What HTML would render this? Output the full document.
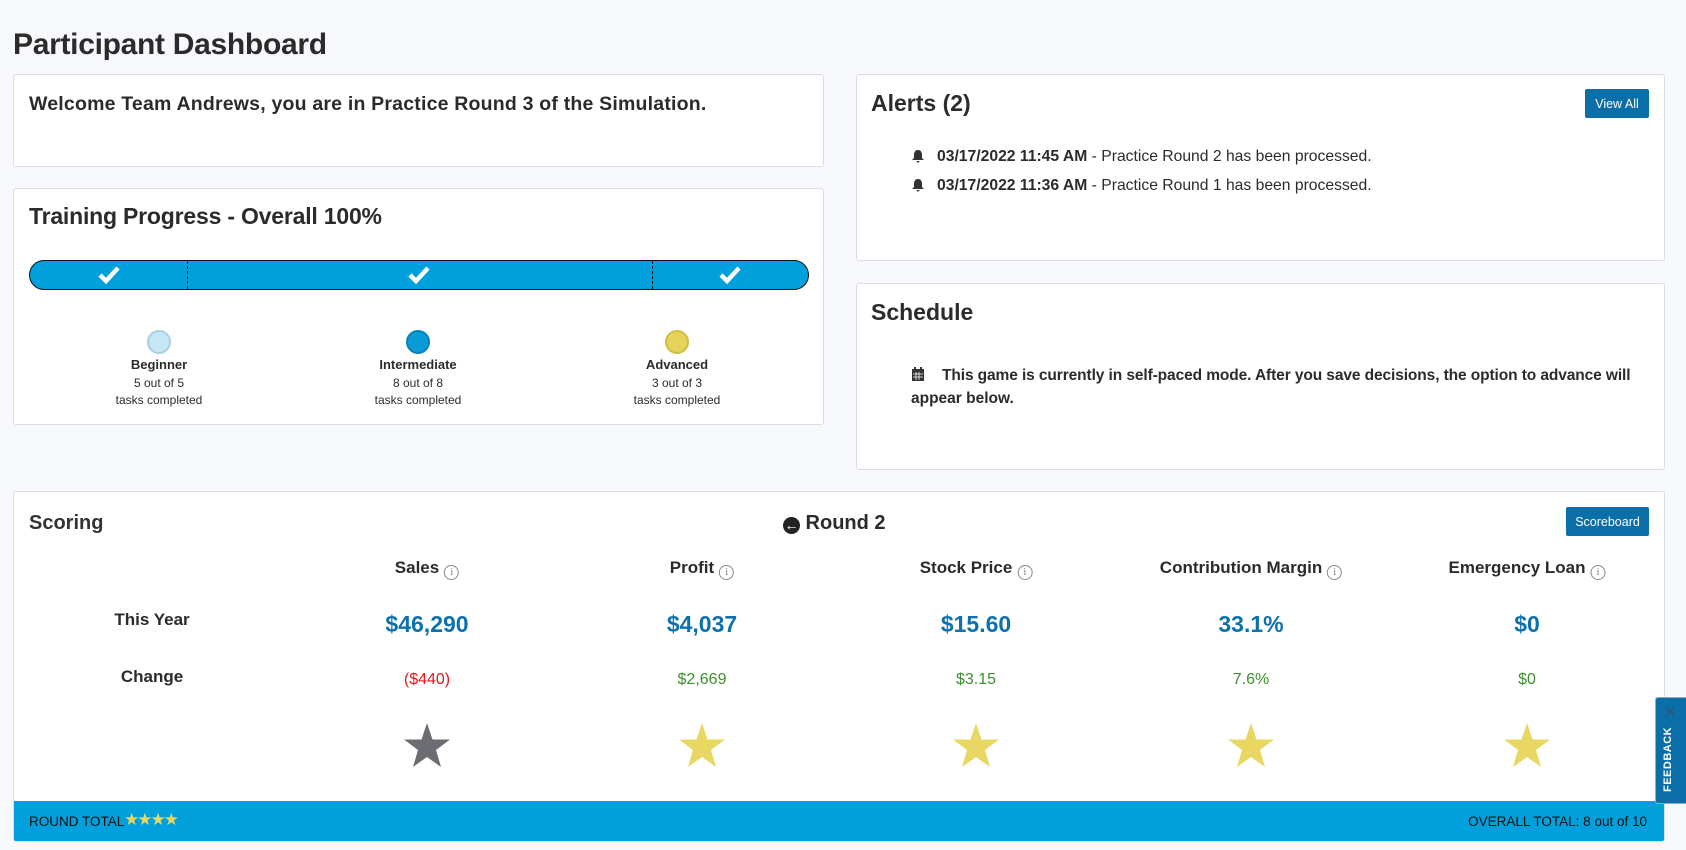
<!DOCTYPE html>
<html><head><meta charset="utf-8"><style>
*{box-sizing:border-box;margin:0;padding:0}
body{width:1686px;height:850px;background:#f7f8fc;font-family:"Liberation Sans",sans-serif;color:#2b2b2b;position:relative;overflow:hidden}
.a{position:absolute;white-space:nowrap}
.card{position:absolute;background:#fff;border:1px solid #dcdde2;border-radius:3px}
.btn{position:absolute;background:#0a6ea8;color:#fff;font-size:12.5px;border-radius:2px;display:flex;align-items:center;justify-content:center}
.c{transform:translateX(-50%);text-align:center}
.lbl{font-size:13px;font-weight:bold}
.sm{font-size:12px}
.hd{font-size:17px;font-weight:bold}
.val{font-size:23px;font-weight:bold;color:#0b72ad}
.chg{font-size:16px;color:#3d8f2d}
.info{display:inline-block;width:15px;height:15px;border:1.3px solid #888;border-radius:50%;font-size:11px;color:#888;line-height:13px;text-align:center;font-weight:normal;vertical-align:-2px;margin-left:5px;font-family:"Liberation Serif",serif}
</style></head><body>
<div class="a" style="left:13px;top:28px;font-size:30px;font-weight:bold;letter-spacing:-0.3px">Participant Dashboard</div>

<div class="card" style="left:13px;top:74px;width:811px;height:93px"></div>
<div class="a" style="left:29px;top:93px;font-size:19.5px;font-weight:bold;letter-spacing:0.2px">Welcome Team Andrews, you are in Practice Round 3 of the Simulation.</div>

<div class="card" style="left:13px;top:188px;width:811px;height:237px"></div>
<div class="a" style="left:29px;top:203px;font-size:23px;font-weight:bold;letter-spacing:-0.2px">Training Progress - Overall 100%</div>
<div class="a" style="left:29px;top:260px;width:780px;height:30px;background:#00a0dc;border:1.5px solid #111;border-radius:15px"></div>
<div class="a" style="left:187px;top:261px;height:28px;border-left:1.5px dashed #111"></div>
<div class="a" style="left:652px;top:261px;height:28px;border-left:1.5px dashed #111"></div>
<svg class="a" style="left:97px;top:264px" width="24" height="22" viewBox="0 0 24 22"><path d="M3 11 L9 17 L21 4" stroke="#fff" stroke-width="4.5" fill="none"/></svg>
<svg class="a" style="left:407px;top:264px" width="24" height="22" viewBox="0 0 24 22"><path d="M3 11 L9 17 L21 4" stroke="#fff" stroke-width="4.5" fill="none"/></svg>
<svg class="a" style="left:718px;top:264px" width="24" height="22" viewBox="0 0 24 22"><path d="M3 11 L9 17 L21 4" stroke="#fff" stroke-width="4.5" fill="none"/></svg>
<div class="a" style="left:147px;top:330px;width:24px;height:24px;border-radius:50%;background:#c6e6f6;border:2px solid #a9cfe3"></div>
<div class="a" style="left:406px;top:330px;width:24px;height:24px;border-radius:50%;background:#0a9ad6;border:2px solid #0683bb"></div>
<div class="a" style="left:665px;top:330px;width:24px;height:24px;border-radius:50%;background:#e6d35c;border:2px solid #cfbd45"></div>
<div class="a c lbl" style="left:159px;top:357px">Beginner</div>
<div class="a c sm" style="left:159px;top:376px">5 out of 5</div>
<div class="a c sm" style="left:159px;top:393px">tasks completed</div>
<div class="a c lbl" style="left:418px;top:357px">Intermediate</div>
<div class="a c sm" style="left:418px;top:376px">8 out of 8</div>
<div class="a c sm" style="left:418px;top:393px">tasks completed</div>
<div class="a c lbl" style="left:677px;top:357px">Advanced</div>
<div class="a c sm" style="left:677px;top:376px">3 out of 3</div>
<div class="a c sm" style="left:677px;top:393px">tasks completed</div>

<div class="card" style="left:856px;top:74px;width:809px;height:187px"></div>
<div class="a" style="left:871px;top:90px;font-size:23px;font-weight:bold">Alerts (2)</div>
<div class="btn" style="left:1585px;top:89px;width:64px;height:29px">View All</div>
<svg class="a" style="left:911px;top:149px" width="14" height="15" viewBox="0 0 14 15"><path d="M7 1 C4 1 3 3.5 3 6 L3 9 L1 11 L13 11 L11 9 L11 6 C11 3.5 10 1 7 1Z M5.5 12 A1.5 1.5 0 0 0 8.5 12Z" fill="#333"/></svg>
<div class="a" style="left:937px;top:148px;font-size:15.7px"><b>03/17/2022 11:45 AM</b> - Practice Round 2 has been processed.</div>
<svg class="a" style="left:911px;top:178px" width="14" height="15" viewBox="0 0 14 15"><path d="M7 1 C4 1 3 3.5 3 6 L3 9 L1 11 L13 11 L11 9 L11 6 C11 3.5 10 1 7 1Z M5.5 12 A1.5 1.5 0 0 0 8.5 12Z" fill="#333"/></svg>
<div class="a" style="left:937px;top:177px;font-size:15.7px"><b>03/17/2022 11:36 AM</b> - Practice Round 1 has been processed.</div>

<div class="card" style="left:856px;top:283px;width:809px;height:187px"></div>
<div class="a" style="left:871px;top:299px;font-size:23px;font-weight:bold">Schedule</div>
<svg class="a" style="left:911px;top:367px" width="14" height="15" viewBox="0 0 14 15"><rect x="1" y="2" width="12" height="12" fill="#333"/><rect x="3" y="0" width="2" height="3" fill="#333"/><rect x="9" y="0" width="2" height="3" fill="#333"/><path d="M2 7h10M2 10h10M5 5v8M8 5v8" stroke="#fff" stroke-width="0.8"/></svg>
<div class="a" style="left:942px;top:367px;font-size:15.5px;font-weight:bold;letter-spacing:-0.1px">This game is currently in self-paced mode. After you save decisions, the option to advance will</div>
<div class="a" style="left:911px;top:390px;font-size:15.5px;font-weight:bold">appear below.</div>

<div class="card" style="left:13px;top:491px;width:1652px;height:351px;overflow:hidden">
<div class="a" style="left:0;bottom:0;width:100%;height:40px;background:#00a0dc"></div>
</div>
<div class="a" style="left:29px;top:512px;font-size:20px;font-weight:bold;color:#333">Scoring</div>
<div class="a" style="left:783px;top:512px;font-size:20px;font-weight:bold"><span style="display:inline-block;width:17px;height:17px;border-radius:50%;background:#222;color:#fff;font-size:14px;line-height:16px;text-align:center;vertical-align:-1px">&#8592;</span> Round 2</div>
<div class="btn" style="left:1566px;top:507px;width:83px;height:29px">Scoreboard</div>

<div class="a c hd" style="left:427px;top:558px">Sales<span class="info">i</span></div>
<div class="a c hd" style="left:702px;top:558px">Profit<span class="info">i</span></div>
<div class="a c hd" style="left:976px;top:558px">Stock Price<span class="info">i</span></div>
<div class="a c hd" style="left:1251px;top:558px">Contribution Margin<span class="info">i</span></div>
<div class="a c hd" style="left:1527px;top:558px">Emergency Loan<span class="info">i</span></div>

<div class="a c hd" style="left:152px;top:610px">This Year</div>
<div class="a c hd" style="left:152px;top:667px">Change</div>

<div class="a c val" style="left:427px;top:611px">$46,290</div>
<div class="a c val" style="left:702px;top:611px">$4,037</div>
<div class="a c val" style="left:976px;top:611px">$15.60</div>
<div class="a c val" style="left:1251px;top:611px">33.1%</div>
<div class="a c val" style="left:1527px;top:611px">$0</div>

<div class="a c chg" style="left:427px;top:671px;color:#e0191b">($440)</div>
<div class="a c chg" style="left:702px;top:671px">$2,669</div>
<div class="a c chg" style="left:976px;top:671px">$3.15</div>
<div class="a c chg" style="left:1251px;top:671px">7.6%</div>
<div class="a c chg" style="left:1527px;top:671px">$0</div>

<svg class="a" style="left:403px;top:721px" width="48" height="48" viewBox="0 0 48 48"><polygon points="24,2 29.5,18.5 47,18.5 33,29 38,46 24,36 10,46 15,29 1,18.5 18.5,18.5" fill="#6b6d72"/></svg>
<svg class="a" style="left:678px;top:721px" width="48" height="48" viewBox="0 0 48 48"><polygon points="24,2 29.5,18.5 47,18.5 33,29 38,46 24,36 10,46 15,29 1,18.5 18.5,18.5" fill="#e8d763"/></svg>
<svg class="a" style="left:952px;top:721px" width="48" height="48" viewBox="0 0 48 48"><polygon points="24,2 29.5,18.5 47,18.5 33,29 38,46 24,36 10,46 15,29 1,18.5 18.5,18.5" fill="#e8d763"/></svg>
<svg class="a" style="left:1227px;top:721px" width="48" height="48" viewBox="0 0 48 48"><polygon points="24,2 29.5,18.5 47,18.5 33,29 38,46 24,36 10,46 15,29 1,18.5 18.5,18.5" fill="#e8d763"/></svg>
<svg class="a" style="left:1503px;top:721px" width="48" height="48" viewBox="0 0 48 48"><polygon points="24,2 29.5,18.5 47,18.5 33,29 38,46 24,36 10,46 15,29 1,18.5 18.5,18.5" fill="#e8d763"/></svg>

<div class="a" style="left:29px;top:814px;font-size:13.5px;color:#111">ROUND TOTAL</div>
<div class="a" style="left:124px;top:810px;color:#e8d763;font-size:17px;letter-spacing:-2px">★★★★</div>
<div class="a" style="right:39px;top:814px;font-size:13.5px;color:#111">OVERALL TOTAL: 8 out of 10</div>

<div class="a" style="left:1655px;top:697px;width:31px;height:107px;background:#0a6ea8;border:1px solid #9ab;border-right:none;border-radius:3px 0 0 3px"></div>
<div class="a" style="left:1664px;top:703px;color:#2a5a80;font-size:15px;font-weight:bold">✕</div>
<div class="a" style="left:1662px;top:792px;transform:rotate(-90deg);transform-origin:0 0;color:#fff;font-size:11px;font-weight:bold;letter-spacing:0.5px">FEEDBACK</div>
</body></html>
